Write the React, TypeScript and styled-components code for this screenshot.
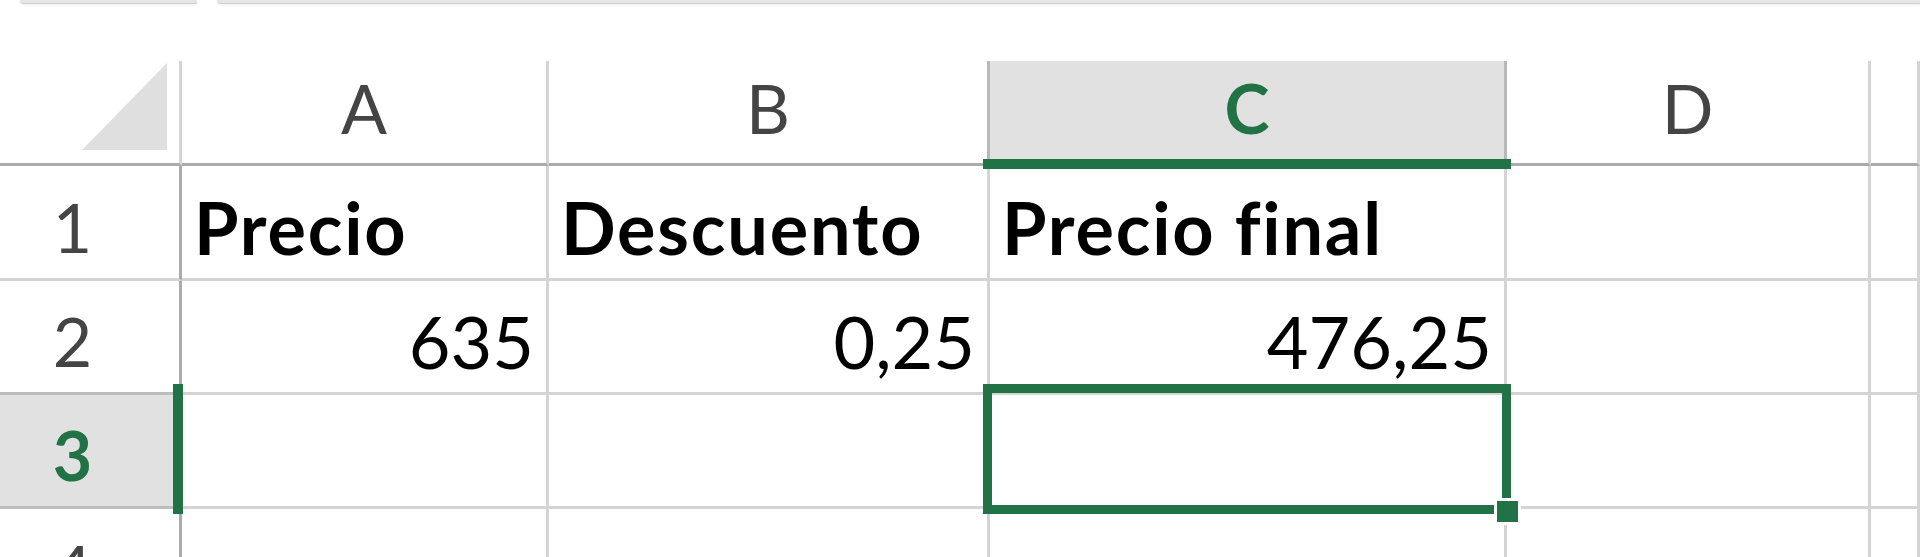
import React from "react";
import styled, { createGlobalStyle, css } from "styled-components";

const GREEN = "#217346";
const GRID = "#d4d4d4";
const HEAD_LINE = "#ababab";

const Global = createGlobalStyle`
  html, body { margin: 0; padding: 0; background: #ffffff; }
  body {
    width: 1920px;
    height: 557px;
    overflow: hidden;
    font-family: Lato, "Noto Sans", sans-serif;
  }
  * { box-sizing: border-box; }
`;

const Page = styled.div`
  display: flex;
  flex-direction: column;
  width: 1920px;
  height: 557px;
  overflow: hidden;
  background: #fff;
`;

const TopBar = styled.div`
  height: 61px;
  flex: none;
  display: flex;
  align-items: flex-start;
  gap: 20px;
  padding-left: 20px;
`;

const NameBox = styled.div`
  width: 177px;
  height: 4px;
  background: #e6e6e6;
  border-bottom: 1px solid #d0d0d0;
  border-bottom-left-radius: 5px;
  border-bottom-right-radius: 2px;
  box-shadow: 0 1px 3px rgba(0, 0, 0, 0.08);
`;

const FormulaBar = styled(NameBox)`
  flex: 1;
  width: auto;
  border-bottom-right-radius: 0;
`;

const Sheet = styled.div`
  display: grid;
  grid-template-columns: 182px 367px 441px 517px 364px 1fr;
  grid-template-rows: 105px 115px 114px 114px 114px;
  flex: none;
`;

const Corner = styled.div`
  display: flex;
  justify-content: flex-end;
  align-items: flex-end;
  padding: 0 12px 13px 0;
  border-right: 3px solid ${GRID};
  border-bottom: 3px solid ${HEAD_LINE};
`;

const SelectAll = styled.div`
  width: 85px;
  height: 87px;
  background: #dfdfdf;
  clip-path: polygon(100% 0, 100% 100%, 0 100%);
`;

const ColHeader = styled.div<{ $selected?: boolean }>`
  position: relative;
  display: flex;
  align-items: center;
  justify-content: center;
  padding-bottom: 8px;
  font-size: 68px;
  line-height: 1;
  color: #444444;
  border-right: 3px solid ${GRID};
  border-bottom: 3px solid ${HEAD_LINE};
  ${(p) =>
    p.$selected &&
    css`
      background: #e1e1e1;
      color: ${GREEN};
      font-weight: 700;
      border-right-color: #b8b8b8;
      &::before {
        content: "";
        position: absolute;
        left: -3px;
        top: 0;
        bottom: 0;
        width: 3px;
        background: #b8b8b8;
      }
      &::after {
        content: "";
        position: absolute;
        left: -7px;
        right: -7px;
        bottom: -6px;
        height: 10px;
        background: ${GREEN};
        z-index: 3;
      }
    `}
`;

const RowHeader = styled.div<{ $selected?: boolean }>`
  position: relative;
  display: flex;
  align-items: flex-end;
  justify-content: center;
  padding: 0 34px 10px 0;
  font-size: 68px;
  line-height: 1.2;
  color: #444444;
  border-right: 3px solid ${HEAD_LINE};
  border-bottom: 3px solid ${GRID};
  ${(p) =>
    p.$selected &&
    css`
      background: #e1e1e1;
      color: ${GREEN};
      font-weight: 700;
      border-bottom-color: #bcbcbc;
      &::before {
        content: "";
        position: absolute;
        left: 0;
        right: 0;
        top: -3px;
        height: 3px;
        background: #bcbcbc;
      }
      &::after {
        content: "";
        position: absolute;
        right: -4px;
        width: 10px;
        top: -11px;
        bottom: -8px;
        background: ${GREEN};
        z-index: 3;
      }
    `}
`;

const Cell = styled.div<{ $align?: "left" | "right"; $bold?: boolean }>`
  position: relative;
  display: flex;
  align-items: flex-end;
  justify-content: ${(p) => (p.$align === "right" ? "flex-end" : "flex-start")};
  padding: 0 12px 8px 12px;
  font-size: 72px;
  line-height: 1.2;
  font-weight: ${(p) => (p.$bold ? 700 : 400)};
  letter-spacing: ${(p) => (p.$bold ? "1.8px" : "0")};
  color: #000;
  white-space: nowrap;
  border-right: 3px solid ${GRID};
  border-bottom: 3px solid ${GRID};
`;

const Selection = styled.div`
  position: absolute;
  top: -11px;
  left: -7px;
  right: -7px;
  bottom: -8px;
  border: 9px solid ${GREEN};
  z-index: 4;
  pointer-events: none;
`;

const FillHandle = styled.div`
  position: absolute;
  right: -19px;
  bottom: -20px;
  width: 27px;
  height: 27px;
  background: ${GREEN};
  border: 3px solid #ffffff;
`;

type CellData = { text?: string; align?: "left" | "right"; bold?: boolean };

const columns = ["A", "B", "C", "D", ""];
const rows: CellData[][] = [
  [
    { text: "Precio", bold: true },
    { text: "Descuento", bold: true },
    { text: "Precio final", bold: true },
    {},
    {},
  ],
  [
    { text: "635", align: "right" },
    { text: "0,25", align: "right" },
    { text: "476,25", align: "right" },
    {},
    {},
  ],
  [{}, {}, {}, {}, {}],
  [{}, {}, {}, {}, {}],
];

const SELECTED_COL = 2;
const SELECTED_ROW = 2;

export default function App() {
  return (
    <>
      <Global />
      <Page>
        <TopBar>
          <NameBox />
          <FormulaBar />
        </TopBar>
        <Sheet>
          <Corner>
            <SelectAll />
          </Corner>
          {columns.map((c, i) => (
            <ColHeader key={`h${i}`} $selected={i === SELECTED_COL}>
              {c}
            </ColHeader>
          ))}
          {rows.map((row, r) => (
            <React.Fragment key={`r${r}`}>
              <RowHeader $selected={r === SELECTED_ROW}>{r + 1}</RowHeader>
              {row.map((cell, c) => (
                <Cell key={`c${r}-${c}`} $align={cell.align} $bold={cell.bold}>
                  {cell.text}
                  {r === SELECTED_ROW && c === SELECTED_COL && (
                    <Selection>
                      <FillHandle />
                    </Selection>
                  )}
                </Cell>
              ))}
            </React.Fragment>
          ))}
        </Sheet>
      </Page>
    </>
  );
}
